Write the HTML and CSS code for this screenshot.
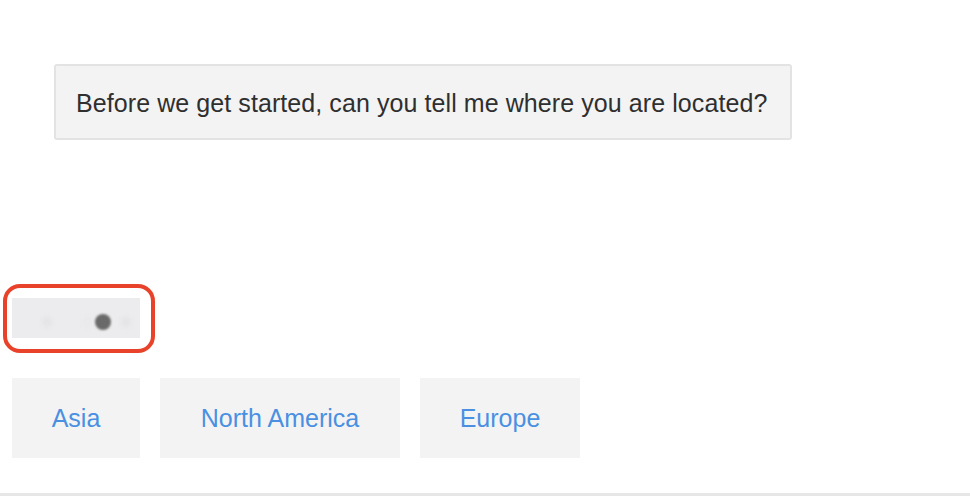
FILE: index.html
```html
<!DOCTYPE html>
<html>
<head>
<meta charset="utf-8">
<link rel="stylesheet" href="styles.css">
</head>
<body>
<div class="chat">
  <div class="bot-row">
    <div class="bubble">Before we get started, can you tell me where you are located?</div>
  </div>
  <div class="typing-outline">
    <div class="typing">
      <span class="dot dot-faint dot-1"></span>
      <span class="dot dot-faint dot-2"></span>
      <span class="dot dot-main"></span>
      <span class="dot dot-faint dot-3"></span>
    </div>
  </div>
  <div class="choices">
    <button class="choice choice-asia">Asia</button>
    <button class="choice choice-na">North America</button>
    <button class="choice choice-eu">Europe</button>
  </div>
</div>
<div class="footer-line"></div>
</body>
</html>
```
FILE: styles.css
```css
html, body {
  margin: 0;
  padding: 0;
  background: #ffffff;
  font-family: "Liberation Sans", Arial, Helvetica, sans-serif;
  width: 970px;
  height: 496px;
  overflow: hidden;
}

.chat {
  height: 493px;
  display: flex;
  flex-direction: column;
  align-items: flex-start;
}

.bot-row {
  margin-top: 64px;
  margin-left: 54px;
}

.bubble {
  box-sizing: border-box;
  width: 738px;
  height: 76px;
  border: 2px solid #e3e3e3;
  border-radius: 3px;
  background: #f3f3f3;
  color: #2f2f2f;
  font-size: 25px;
  letter-spacing: 0.08px;
  line-height: 74px;
  padding: 0 0 0 20px;
  white-space: nowrap;
}

.typing-outline {
  margin-top: 144px;
  margin-left: 3px;
  box-sizing: border-box;
  width: 152px;
  height: 69px;
  border: 4px solid #e8432a;
  border-radius: 17px;
  padding: 10px 11px 11px 5px;
}

.typing {
  width: 128px;
  height: 40px;
  background: #ececee;
  display: flex;
  align-items: center;
}

.dot {
  display: block;
  border-radius: 50%;
  flex: none;
  margin-top: 8px;
}

.dot-faint {
  width: 10px;
  height: 10px;
  background: #e4e4e6;
  filter: blur(2px);
}

.dot-1 {
  margin-left: 30px;
}

.dot-2 {
  margin-left: 31px;
  background: #e9e9eb;
}

.dot-main {
  margin-left: 2px;
  width: 16px;
  height: 16px;
  background: #6a6a6a;
  filter: blur(1px);
}

.dot-3 {
  margin-left: 10px;
}

.choices {
  margin-top: 25px;
  margin-left: 12px;
  display: flex;
  gap: 20px;
}

.choice {
  height: 80px;
  border: none;
  border-radius: 0;
  background: #f3f3f3;
  color: #4a90e2;
  font-family: "Liberation Sans", Arial, Helvetica, sans-serif;
  font-size: 25px;
  padding: 0;
  margin: 0;
}

.choice-asia { width: 128px; }
.choice-na { width: 240px; }
.choice-eu { width: 160px; }

.footer-line {
  height: 3px;
  background: #e6e6e6;
}
```
